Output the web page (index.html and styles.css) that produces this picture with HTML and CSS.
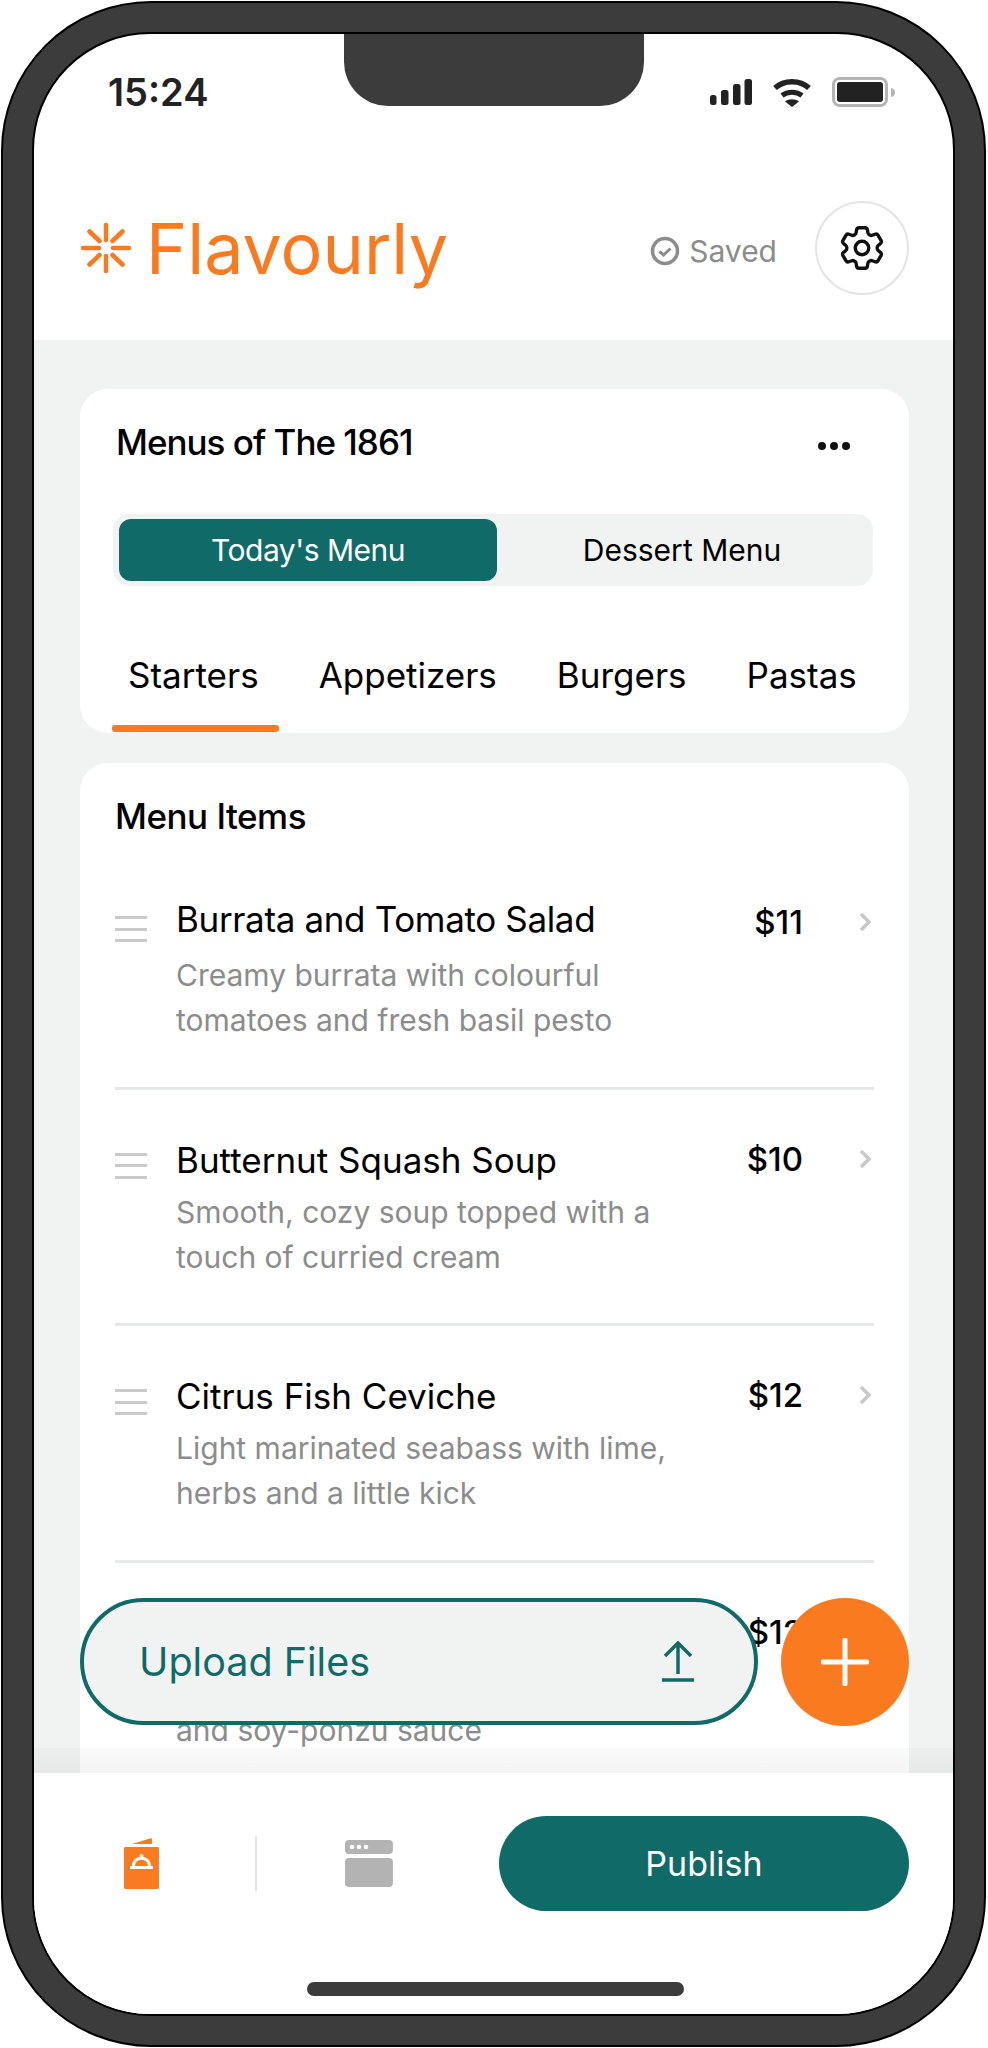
FILE: index.html
```html
<!DOCTYPE html>
<html lang="en">
<head>
  <meta charset="UTF-8">
  <title>Flavourly</title>
  <link rel="stylesheet" href="styles.css">
</head>
<body>
  <div class="phone">
    <div class="screen">
      <div class="notch"></div>

      <div class="status-bar">
        <span class="time">15:24</span>
        <div class="status-icons">
          <svg width="42" height="26" viewBox="0 0 42 26" fill="#222"><rect x="0" y="16" width="6.500" height="10" rx="2.500"/><rect x="11" y="11" width="7.500" height="15" rx="2.500"/><rect x="23" y="5" width="7.500" height="21" rx="2.500"/><rect x="34.500" y="0" width="7.500" height="26" rx="2.500"/></svg>
          <svg width="40" height="29" viewBox="0 0 40 29" fill="none" stroke="#222"><path d="M3 10C12 1.500 28 1.500 37 10" stroke-width="5.500"/><path d="M10 17.500C15.500 13 24.500 13 30 17.500" stroke-width="5"/><path d="M13 23.500C17 20.500 23 20.500 27 23.500L20 29z" fill="#222" stroke="none"/></svg>
          <svg width="63" height="30" viewBox="0 0 63 30"><rect x="1.500" y="1.500" width="53" height="27" rx="6" fill="none" stroke="#b5b5b5" stroke-width="3"/><rect x="5" y="5" width="46" height="20" rx="3" fill="#222"/><path d="M59 11c2.500.5 4 2 4 4.500s-1.500 4-4 4.500z" fill="#b5b5b5"/></svg>
        </div>
      </div>

      <header class="app-header">
        <div class="logo">
          <svg width="52" height="52" viewBox="0 0 52 52" stroke="#f97a1f" stroke-width="4.500" stroke-linecap="round"><path d="M26 3v15M26 34v15M3 26h16M33 26h16M9.500 9.500l10 9.500M42.500 9.500l-10 9.500M9.500 42.500l10-9.500M42.500 42.500l-10-9.500"/></svg>
          <span class="logo-text">Flavourly</span>
        </div>
        <div class="header-right">
          <div class="saved">
            <svg width="30" height="30" viewBox="0 0 30 30" fill="none" stroke="#8c8c8c" stroke-width="3.500"><circle cx="15" cy="15" r="12.500"/><path d="M9.500 15.500l4 3.500 7-6.500" stroke-width="3"/></svg>
            <span>Saved</span>
          </div>
          <div class="gear-btn">
            <svg width="54" height="54" viewBox="0 0 24 24" fill="none" stroke="#111" stroke-width="1.500" stroke-linejoin="round"><path d="M9.594 3.940c.09-.542.56-.94 1.110-.94h2.593c.55 0 1.020.398 1.110.94l.213 1.281c.063.374.313.686.645.870.074.04.147.083.22.127.324.196.72.257 1.075.124l1.217-.456a1.125 1.125 0 011.370.49l1.296 2.247a1.125 1.125 0 01-.26 1.431l-1.003.827c-.293.24-.438.613-.431.992a6.759 6.759 0 010 .255c-.007.378.138.75.43.99l1.005.828c.424.35.534.954.26 1.430l-1.298 2.247a1.125 1.125 0 01-1.369.491l-1.217-.456c-.355-.133-.75-.072-1.076.124a6.570 6.570 0 01-.22.128c-.331.183-.581.495-.644.869l-.213 1.280c-.09.543-.56.941-1.110.941h-2.594c-.55 0-1.020-.398-1.110-.94l-.213-1.281c-.062-.374-.312-.686-.644-.87a6.520 6.520 0 01-.22-.127c-.325-.196-.72-.257-1.076-.124l-1.217.456a1.125 1.125 0 01-1.369-.49l-1.297-2.247a1.125 1.125 0 01.26-1.431l1.004-.827c.292-.24.437-.613.43-.992a6.932 6.932 0 010-.255c.007-.378-.138-.75-.43-.99l-1.004-.828a1.125 1.125 0 01-.26-1.430l1.297-2.247a1.125 1.125 0 011.370-.491l1.216.456c.356.133.751.072 1.076-.124.072-.044.146-.087.22-.128.332-.183.582-.495.644-.869l.214-1.281z"/><circle cx="12" cy="12" r="3"/></svg>
          </div>
        </div>
      </header>

      <main class="content">
        <section class="card menus-card">
          <div class="card-head">
            <h2>Menus of The 1861</h2>
            <div class="dots"><i></i><i></i><i></i></div>
          </div>
          <div class="segment">
            <div class="seg-item active">Today's Menu</div>
            <div class="seg-item">Dessert Menu</div>
          </div>
          <div class="tabs">
            <div class="tab active">Starters</div>
            <div class="tab">Appetizers</div>
            <div class="tab">Burgers</div>
            <div class="tab">Pastas</div>
          </div>
        </section>

        <section class="card items-card">
          <h2>Menu Items</h2>

          <div class="item first">
            <div class="drag"><i></i><i></i><i></i></div>
            <div class="item-text">
              <div class="item-name">Burrata and Tomato Salad</div>
              <p>Creamy burrata with colourful<br>tomatoes and fresh basil pesto</p>
            </div>
            <div class="price">$11</div>
            <svg class="chev" width="13" height="20" viewBox="0 0 13 20" fill="none" stroke="#c8c8c8" stroke-width="3.500"><path d="M2 2l8 8-8 8"/></svg>
          </div>

          <div class="item">
            <div class="drag"><i></i><i></i><i></i></div>
            <div class="item-text">
              <div class="item-name">Butternut Squash Soup</div>
              <p>Smooth, cozy soup topped with a<br>touch of curried cream</p>
            </div>
            <div class="price">$10</div>
            <svg class="chev" width="13" height="20" viewBox="0 0 13 20" fill="none" stroke="#c8c8c8" stroke-width="3.500"><path d="M2 2l8 8-8 8"/></svg>
          </div>

          <div class="item">
            <div class="drag"><i></i><i></i><i></i></div>
            <div class="item-text">
              <div class="item-name">Citrus Fish Ceviche</div>
              <p>Light marinated seabass with lime,<br>herbs and a little kick</p>
            </div>
            <div class="price">$12</div>
            <svg class="chev" width="13" height="20" viewBox="0 0 13 20" fill="none" stroke="#c8c8c8" stroke-width="3.500"><path d="M2 2l8 8-8 8"/></svg>
          </div>

          <div class="item">
            <div class="drag"><i></i><i></i><i></i></div>
            <div class="item-text">
              <div class="item-name">&nbsp;</div>
              <p><br>and soy-ponzu sauce</p>
            </div>
            <div class="price">$12</div>
            <svg class="chev" width="13" height="20" viewBox="0 0 13 20" fill="none" stroke="#c8c8c8" stroke-width="3.500"><path d="M2 2l8 8-8 8"/></svg>
          </div>
        </section>
      </main>

      <div class="float-row">
        <div class="upload">
          <span>Upload Files</span>
          <svg width="32" height="42" viewBox="0 0 32 42" fill="none" stroke="#106a68" stroke-width="3.500"><path d="M16 2v31M3 15L16 2l13 13"/><path d="M0 39h32"/></svg>
        </div>
        <div class="fab">
          <svg width="48" height="48" viewBox="0 0 48 48" stroke="#fff" stroke-width="5" stroke-linecap="round"><path d="M24 2v44M2 24h44"/></svg>
        </div>
      </div>

      <div class="nav-fade"></div>

      <nav class="bottom-nav">
        <svg class="nav-icon" width="36" height="51" viewBox="0 0 36 51"><path d="M8 6L26 .4c1-.3 2 .2 2 1.300V6z" fill="#f97a1f"/><rect x="0" y="9" width="35" height="42" rx="1.500" fill="#f97a1f"/><path d="M6 29.500h23M9.500 28C9.500 17.500 25.500 17.500 25.500 28" fill="none" stroke="#fff" stroke-width="3"/><circle cx="17.500" cy="18" r="2" fill="#fff"/></svg>
        <div class="nav-line"></div>
        <svg class="nav-icon" width="48" height="47" viewBox="0 0 48 47" fill="#b3b3b3"><rect x="0" y="0" width="48" height="14" rx="4"/><rect x="0" y="18" width="48" height="29" rx="4"/><circle cx="7" cy="7" r="2.300" fill="#fff"/><circle cx="14" cy="7" r="2.300" fill="#fff"/><circle cx="21" cy="7" r="2.300" fill="#fff"/></svg>
        <div class="publish">Publish</div>
      </nav>

      <div class="home-bar"></div>
    </div>
  </div>
</body>
</html>
```

FILE: styles.css
```css
* {
  box-sizing: border-box;
}

body {
  margin: 0;
  background: #fff;
  font-family: Inter, "Liberation Sans", sans-serif;
  color: #000;
}

.phone {
  width: 985px;
  height: 2046px;
  margin: 1px;
  padding: 29px;
  background: #3c3c3c;
  border: 2px solid #000;
  border-radius: 150px;
}

.screen {
  position: relative;
  display: flex;
  flex-direction: column;
  height: 100%;
  background: #fff;
  border: 2px solid #000;
  border-radius: 118px;
  overflow: hidden;
}

.notch {
  position: absolute;
  top: 0;
  left: 310px;
  width: 300px;
  height: 72px;
  background: #3c3c3c;
  border-radius: 0 0 44px 44px;
}

.status-bar {
  display: flex;
  justify-content: space-between;
  align-items: center;
  height: 44px;
  margin-top: 36px;
  padding: 0 58px 0 74px;
}

.time {
  font-size: 38px;
  font-weight: 600;
  color: #222;
}

.status-icons {
  display: flex;
  align-items: center;
  gap: 20px;
}

.app-header {
  display: flex;
  justify-content: space-between;
  align-items: center;
  height: 226px;
  padding: 42px 44px 0 46px;
}

.logo {
  display: flex;
  align-items: center;
  gap: 14px;
}

.logo-text {
  font-size: 70px;
  font-weight: 400;
  color: #f97a1f;
}

.header-right {
  display: flex;
  align-items: center;
  gap: 38px;
}

.saved {
  display: flex;
  align-items: center;
  gap: 9px;
  margin-top: 6px;
  font-size: 30px;
  color: #8c8c8c;
}

.gear-btn {
  display: flex;
  justify-content: center;
  align-items: center;
  width: 94px;
  height: 94px;
  border: 2px solid #e3e5e4;
  border-radius: 50%;
}

.content {
  flex: 1;
  min-height: 0;
  padding: 49px 44px 0 46px;
  background: #f1f3f2;
  overflow: hidden;
}

.card {
  background: #fff;
  border-radius: 28px;
}

h2 {
  margin: 0;
  font-size: 35px;
  font-weight: 500;
  letter-spacing: -0.500px;
}

.menus-card {
  height: 344px;
  padding: 32px 36px 0;
}

.menus-card h2 {
  letter-spacing: -1px;
}

.card-head {
  display: flex;
  justify-content: space-between;
  align-items: center;
  padding-right: 23px;
}

.dots {
  display: flex;
  gap: 4px;
  margin-top: 8px;
}

.dots i {
  width: 8px;
  height: 8px;
  background: #111;
  border-radius: 50%;
}

.segment {
  display: flex;
  height: 72px;
  margin: 51px 0 0 -3px;
  padding: 5px 6px;
  background: #f1f3f2;
  border-radius: 16px;
}

.seg-item {
  flex: 1;
  display: flex;
  justify-content: center;
  align-items: center;
  font-size: 30px;
  border-radius: 12px;
}

.seg-item.active {
  flex: 0 0 378px;
  background: #106a68;
  color: #fff;
  letter-spacing: -0.500px;
}

.tabs {
  display: flex;
  gap: 26px;
  margin: 68px 0 0 -5px;
}

.tab {
  position: relative;
  padding: 0 17px;
  font-size: 35px;
  white-space: nowrap;
}

.tab.active::after {
  content: "";
  position: absolute;
  left: 1px;
  right: -3px;
  top: 71px;
  height: 7px;
  background: #f97a1f;
  border-radius: 3px;
}

.items-card {
  height: 1100px;
  margin-top: 30px;
  padding: 32px 35px 0 35px;
}

.items-card h2 {
  margin-bottom: 16px;
}

.item {
  display: flex;
  align-items: flex-start;
  height: 236.500px;
  padding-top: 49px;
  border-bottom: 3px solid #e6e8e7;
}

.drag {
  width: 61px;
  padding-top: 14px;
}

.drag i {
  display: block;
  width: 32px;
  height: 3px;
  margin-bottom: 8.500px;
  background: #cbcbcb;
}

.item-text {
  flex: 1;
}

.item-name {
  font-size: 35px;
}

.first .item-name {
  margin-top: -4px;
  letter-spacing: -0.350px;
}

.item-text p {
  margin: 9px 0 0;
  font-size: 30px;
  line-height: 45px;
  color: #8c8c8c;
}

.first .item-text p {
  margin-top: 13px;
}

.price {
  margin-right: 56px;
  font-size: 33px;
  font-weight: 500;
}

.chev {
  margin: 10px 2px 0 0;
}

.float-row {
  position: absolute;
  top: 1564px;
  left: 46px;
  right: 44px;
  display: flex;
  justify-content: space-between;
}

.upload {
  display: flex;
  justify-content: space-between;
  align-items: center;
  width: 678px;
  height: 127px;
  padding: 0 60px 0 55px;
  background: #f1f3f2;
  border: 4px solid #106a68;
  border-radius: 64px;
  font-size: 39.500px;
  color: #106a68;
}

.fab {
  display: flex;
  justify-content: center;
  align-items: center;
  width: 128px;
  height: 128px;
  background: #f97a1f;
  border-radius: 50%;
}

.nav-fade {
  position: absolute;
  top: 1714px;
  left: 0;
  right: 0;
  height: 25px;
  background: linear-gradient(rgba(0, 0, 0, 0.02), rgba(0, 0, 0, 0.045));
}

.bottom-nav {
  position: relative;
  display: flex;
  align-items: center;
  flex-shrink: 0;
  height: 241px;
  padding: 0 44px 60px 90px;
  background: #fff;
}

.nav-line {
  width: 2px;
  height: 55px;
  margin: 0 88px 0 95px;
  background: #e3e5e4;
}

.publish {
  display: flex;
  justify-content: center;
  align-items: center;
  width: 411px;
  height: 95px;
  margin-left: 106px;
  background: #106a68;
  color: #fff;
  font-size: 34px;
  border-radius: 48px;
}

.home-bar {
  position: absolute;
  left: 273px;
  bottom: 18px;
  width: 377px;
  height: 14px;
  background: #3c3c3c;
  border-radius: 7px;
}
```
